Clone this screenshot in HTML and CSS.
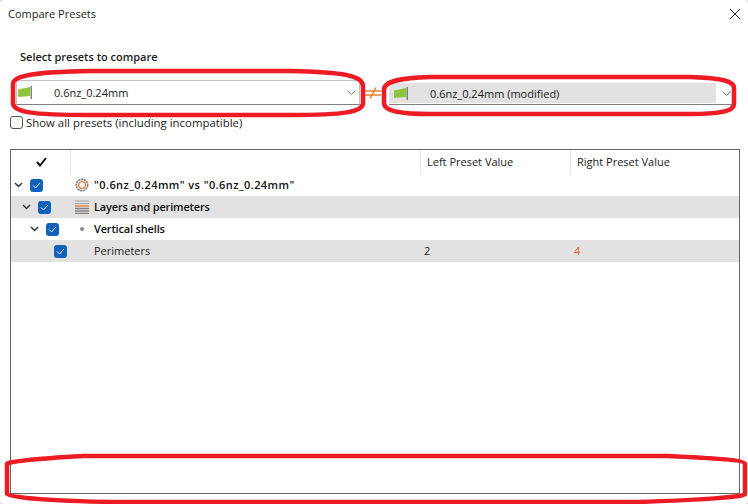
FILE: index.html
```html
<!DOCTYPE html>
<html lang="en">
<head>
    <meta charset="UTF-8">
    <title>Compare Presets</title>
    <link rel="stylesheet" href="styles.css">
</head>
<body>
    <div class="dialog">
        <div class="title-bar">
            <span class="title">Compare Presets</span>
            <svg class="close-icon" width="10" height="10" viewBox="0 0 10 10"><path d="M0 0L10 10M10 0L0 10" stroke="#222" stroke-width="1" fill="none"/></svg>
        </div>

        <div class="select-label">Select presets to compare</div>
        <div class="combo-row">
            <div class="combo">
                <svg class="flag" width="15" height="13" viewBox="0 0 15 13"><path d="M0 3.5L12 1V10L0 11Z" fill="#8cc63f"/><rect x="12.5" y="0" width="1.5" height="13" fill="#808080"/></svg>
                <span class="combo-text">0.6nz_0.24mm</span>
                <svg class="chevron" width="9" height="5" viewBox="0 0 9 5"><path d="M0.5 0.5L4.5 4.5L8.5 0.5" stroke="#777" fill="none"/></svg>
            </div>
            <svg class="not-equal" width="16" height="12" viewBox="0 0 16 12"><path d="M0 4H16M0 8H16M11 0.5L5 11.5" stroke="#ed7d31" stroke-width="1.5" fill="none"/></svg>
            <div class="combo-modified">
                <div class="combo-fill">
                    <svg class="flag" width="15" height="13" viewBox="0 0 15 13"><path d="M0 3.5L12 1V10L0 11Z" fill="#8cc63f"/><rect x="12.5" y="0" width="1.5" height="13" fill="#808080"/></svg>
                    <span class="combo-text">0.6nz_0.24mm (modified)</span>
                </div>
                <svg class="chevron" width="9" height="5" viewBox="0 0 9 5"><path d="M0.5 0.5L4.5 4.5L8.5 0.5" stroke="#777" fill="none"/></svg>
            </div>
        </div>
        <label class="show-all"><span class="empty-box"></span>Show all presets (including incompatible)</label>

        <div class="tree">
            <div class="tree-header">
                <div class="col-check"><svg width="11" height="10" viewBox="0 0 11 10"><path d="M1 5L4 8.5L10 1" stroke="#111" stroke-width="2" fill="none"/></svg></div>
                <div class="col-name"></div>
                <div class="col-left"><span class="row-label">Left Preset Value</span></div>
                <div class="col-right"><span class="row-label">Right Preset Value</span></div>
            </div>

            <div class="tree-row">
                <div class="col-check indent-0">
                    <svg class="expander" width="9" height="6" viewBox="0 0 9 6"><path d="M1 1L4.5 4.5L8 1" stroke="#333" stroke-width="1.5" fill="none"/></svg>
                    <span class="check"><svg width="9" height="7" viewBox="0 0 9 7"><path d="M1 3.5L3.5 6L8 1" stroke="#dce9f7" fill="none"/></svg></span>
                </div>
                <div class="col-name bold root-name">
                    <svg class="row-icon" width="14" height="14" viewBox="0 0 14 14"><circle cx="7" cy="7" r="5.7" fill="none" stroke="#808080" stroke-width="1.6" stroke-dasharray="2.2 0.6"/><circle cx="7" cy="7" r="3.4" fill="#fff" stroke="#ed7d31" stroke-width="1.4"/></svg>
                    <span class="row-label">"0.6nz_0.24mm" vs "0.6nz_0.24mm"</span>
                </div>
            </div>

            <div class="tree-row shaded">
                <div class="col-check indent-1">
                    <svg class="expander" width="9" height="6" viewBox="0 0 9 6"><path d="M1 1L4.5 4.5L8 1" stroke="#333" stroke-width="1.5" fill="none"/></svg>
                    <span class="check"><svg width="9" height="7" viewBox="0 0 9 7"><path d="M1 3.5L3.5 6L8 1" stroke="#dce9f7" fill="none"/></svg></span>
                </div>
                <div class="col-name bold tight-name">
                    <svg class="row-icon" width="14" height="14" viewBox="0 0 14 14"><path d="M0 1H14M0 3.5H14" stroke="#a6a6a6" stroke-width="1.2"/><path d="M0 6H14" stroke="#ed7d31" stroke-width="1.4"/><path d="M0 8.5H14M0 11H14M0 13.4H14" stroke="#808080" stroke-width="1.3"/></svg>
                    <span class="row-label">Layers and perimeters</span>
                </div>
            </div>

            <div class="tree-row">
                <div class="col-check indent-2">
                    <svg class="expander" width="9" height="6" viewBox="0 0 9 6"><path d="M1 1L4.5 4.5L8 1" stroke="#333" stroke-width="1.5" fill="none"/></svg>
                    <span class="check"><svg width="9" height="7" viewBox="0 0 9 7"><path d="M1 3.5L3.5 6L8 1" stroke="#dce9f7" fill="none"/></svg></span>
                </div>
                <div class="col-name bold tight-name">
                    <span class="row-icon dot-box"><span class="dot"></span></span>
                    <span class="row-label">Vertical shells</span>
                </div>
            </div>

            <div class="tree-row shaded">
                <div class="col-check indent-3">
                    <span class="check"><svg width="9" height="7" viewBox="0 0 9 7"><path d="M1 3.5L3.5 6L8 1" stroke="#dce9f7" fill="none"/></svg></span>
                </div>
                <div class="col-name">
                    <span class="row-icon"></span>
                    <span class="row-label">Perimeters</span>
                </div>
                <div class="col-left value"><span class="row-label">2</span></div>
                <div class="col-right value changed"><span class="row-label">4</span></div>
            </div>
        </div>
    </div>

    <!-- red marker circles drawn on top of the screenshot -->
    <svg class="markers" width="748" height="504" viewBox="0 0 748 504">
        <path d="M13 84C13 76 30 72 90 71H290C345 72 363 76 363 86V103C363 112 345 115 290 115H90C30 115 13 112 13 103Z"/>
        <path d="M384 90C384 81 400 78 430 77H690C722 78 734 81 734 88V104C734 111 722 114 690 114H430C400 114 384 111 384 103Z"/>
        <path d="M7 464C7 462 30 459 83 456H668C710 458 745 460 745 464V494C745 497 700 500 637 502H114C60 501 7 498 7 494Z"/>
    </svg>
</body>
</html>
```
FILE: styles.css
```css
* {
    box-sizing: border-box;
}
body {
    margin: 0;
    width: 748px;
    height: 504px;
    overflow: hidden;
    background: #e4e4e4;
    font-family: "Open Sans", "Noto Sans", sans-serif;
    font-size: 11px;
    color: #1c1c1c;
}
.dialog {
    height: 504px;
    display: flex;
    flex-direction: column;
    background: #fff;
    border-radius: 5px;
}
.title-bar {
    display: flex;
    justify-content: space-between;
    align-items: center;
    height: 27px;
    padding: 0 8px;
}
.select-label {
    margin: 22px 0 0 20px;
    height: 15px;
    line-height: 15px;
    font-weight: 600;
}
.combo-row {
    display: flex;
    align-items: center;
    margin: 16px 0 0 16px;
    height: 25px;
}
.combo {
    display: flex;
    align-items: center;
    flex: none;
    width: 344px;
    height: 25px;
    border: 1px solid #c4c4c4;
    border-bottom-color: #808080;
    padding: 0 3px 0 1px;
}
.combo-modified {
    display: flex;
    flex: none;
    width: 345px;
    height: 25px;
    border-bottom: 1px solid #808080;
    padding-top: 3px;
}
.combo-fill {
    display: flex;
    align-items: center;
    width: 327px;
    height: 20px;
    background: #e2e2e2;
    padding-left: 5px;
}
.flag {
    flex: none;
}
.combo-text {
    margin-left: 21px;
}
.chevron {
    flex: none;
    margin-left: auto;
}
.combo-modified .chevron {
    margin: 8px 3px 0 auto;
}
.not-equal {
    flex: none;
    margin: 0 8px 0 5px;
}
.show-all {
    display: flex;
    align-items: center;
    margin: 10px 0 0 10px;
    height: 14px;
    font-size: 11.4px;
}
.empty-box {
    width: 13px;
    height: 13px;
    margin-right: 3px;
    background: #f7f7f7;
    border: 1px solid #555;
    border-radius: 3px;
}
.tree {
    width: 730px;
    height: 345px;
    margin: 20px 0 0 10px;
    border: 1px solid #666;
}
.tree-header {
    display: flex;
    height: 24px;
}
.tree-header > div {
    display: flex;
    align-items: center;
    height: 24px;
}
.tree-header .col-check {
    justify-content: center;
    padding-left: 1px;
}
.tree-header .col-name {
    border-left: 1px solid #e5e5e5;
}
.tree-header .col-left, .tree-header .col-right {
    border-left: 1px solid #e5e5e5;
    padding-left: 6px;
}
.tree-row {
    display: flex;
    align-items: center;
    height: 22px;
}
.shaded {
    background: #e2e2e2;
}
.col-check {
    display: flex;
    align-items: center;
    flex: none;
    width: 59px;
}
.col-name {
    display: flex;
    align-items: center;
    flex: none;
    width: 350px;
    padding-left: 5px;
}
.col-left {
    flex: none;
    width: 150px;
}
.col-right {
    flex: none;
    width: 168px;
}
.row-label {
    display: block;
    padding-bottom: 2px;
}
.value {
    padding-left: 4px;
}
.changed {
    color: #f0582a;
}
.bold {
    font-weight: 600;
    color: #111;
}
.root-name {
    letter-spacing: 0.43px;
}
.tight-name {
    letter-spacing: -0.17px;
}
.indent-0 {
    padding-left: 3px;
}
.indent-1 {
    padding-left: 11px;
}
.indent-2 {
    padding-left: 19px;
}
.indent-3 {
    padding-left: 43px;
}
.expander {
    flex: none;
    margin-right: 7px;
}
.check {
    display: flex;
    align-items: center;
    justify-content: center;
    flex: none;
    width: 13px;
    height: 13px;
    background: #0f62b8;
    border-radius: 3px;
}
.row-icon {
    flex: none;
    width: 14px;
    height: 14px;
    margin-right: 5px;
}
.dot-box {
    display: flex;
    align-items: center;
    justify-content: center;
}
.dot {
    width: 4px;
    height: 4px;
    border-radius: 50%;
    background: #8a8a8a;
}
.markers {
    position: absolute;
    top: 0;
    left: 0;
    fill: none;
    stroke: #ed1c24;
    stroke-width: 4.5;
}
```
